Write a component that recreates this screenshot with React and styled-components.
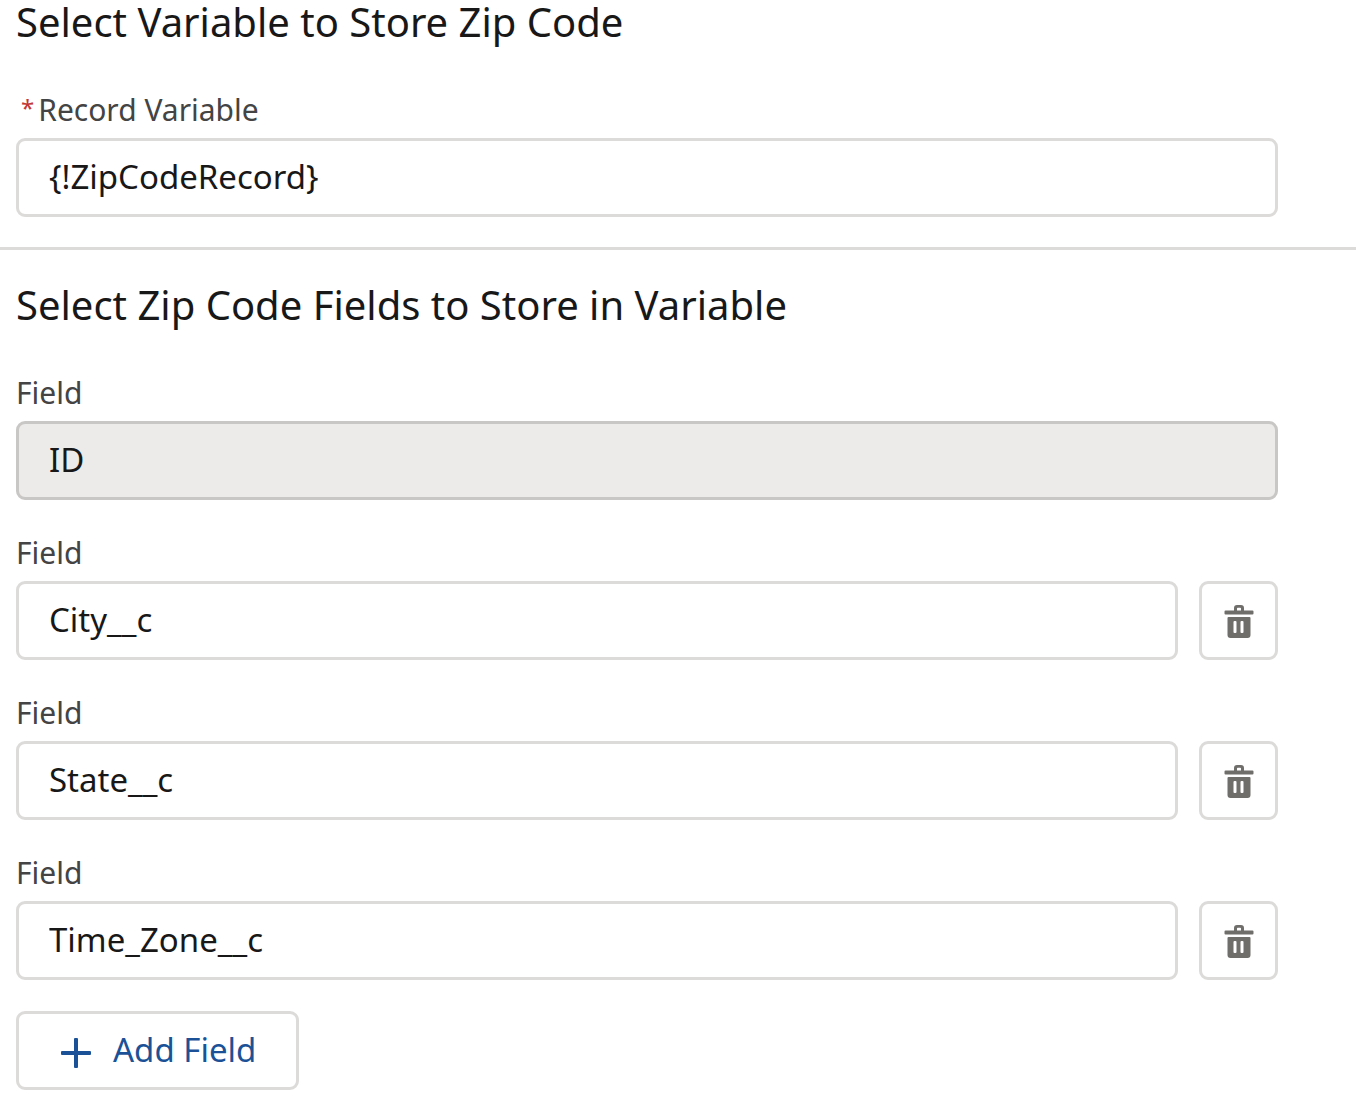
import { useState } from 'react';
import styled, { createGlobalStyle } from 'styled-components';

const GlobalStyle = createGlobalStyle`
  *, *::before, *::after {
    box-sizing: border-box;
  }

  body {
    margin: 0;
    background: #fff;
    color: #181818;
    font-family: 'Noto Sans', sans-serif;
  }
`;

const Section = styled.section`
  padding: 0 78px 0 16px;
`;

const Divider = styled.hr`
  height: 3px;
  margin: 30px 0 33px;
  border: 0;
  background: #dddbda;
`;

const Heading = styled.h2`
  margin: 0 0 44px;
  font-size: 40px;
  font-weight: 400;
  line-height: 44px;
`;

const FieldGroup = styled.div`
  margin-bottom: ${({ $last }) => ($last ? '0' : '31px')};
`;

const Label = styled.label`
  display: block;
  margin-bottom: 6px;
  color: #444;
  font-size: 30px;
  line-height: 44px;
`;

const Required = styled.abbr`
  margin: 0 4px 0 5px;
  color: #c23934;
  font-size: 24px;
  line-height: 0;
  text-decoration: none;
  vertical-align: 4px;
`;

const FieldRow = styled.div`
  display: flex;
  gap: 21px;
`;

const TextInput = styled.input`
  flex: 1;
  min-width: 0;
  height: 79px;
  padding: 0 30px 2px;
  border: 3px solid #dddbda;
  border-radius: 9px;
  background: #fff;
  color: #181818;
  font: inherit;
  font-size: 33px;

  &:disabled {
    border-color: #c9c7c5;
    background: #ecebea;
  }
`;

const Button = styled.button`
  display: inline-flex;
  align-items: center;
  justify-content: center;
  height: 79px;
  border: 3px solid #dddbda;
  border-radius: 9px;
  background: #fff;
  font: inherit;
  font-size: 33px;
  cursor: pointer;
`;

const DeleteButton = styled(Button)`
  flex: none;
  width: 79px;
  padding: 0;
  color: #706e6b;
`;

const AddButton = styled(Button)`
  gap: 20px;
  padding: 0 40px;
  color: #1b5297;
`;

const ButtonLabel = styled.span`
  padding-bottom: 2px;
`;

const TrashIcon = () => (
  <svg width="34" height="34" viewBox="0 0 34 34" fill="currentColor" aria-hidden="true">
    <path
      fillRule="evenodd"
      d="M3.500 6.500H12V4a3 3 0 0 1 3-3h4a3 3 0 0 1 3 3v2.500H30.500a1 1 0 0 1 1 1V9.500a1 1 0 0 1-1 1H3.500a1 1 0 0 1-1-1V7.500a1 1 0 0 1 1-1ZM15 6.500h4V4.500a.8.8 0 0 0-.8-.8h-2.400a.8.8 0 0 0-.8.8Z"
    />
    <path
      fillRule="evenodd"
      d="M6.500 13h21a1 1 0 0 1 1 1v17a3 3 0 0 1-3 3H8.500a3 3 0 0 1-3-3V14a1 1 0 0 1 1-1Zm6 4a1 1 0 0 0-1 1v10a1 1 0 0 0 1 1h1a1 1 0 0 0 1-1V18a1 1 0 0 0-1-1Zm7 0a1 1 0 0 0-1 1v10a1 1 0 0 0 1 1h1a1 1 0 0 0 1-1V18a1 1 0 0 0-1-1Z"
    />
  </svg>
);

const PlusIcon = () => (
  <svg width="34" height="34" viewBox="0 0 34 34" fill="currentColor" aria-hidden="true">
    <path d="M15 5a1 1 0 0 1 1-1h2a1 1 0 0 1 1 1v12h12a1 1 0 0 1 1 1v2a1 1 0 0 1-1 1H19v12a1 1 0 0 1-1 1h-2a1 1 0 0 1-1-1V21H3a1 1 0 0 1-1-1v-2a1 1 0 0 1 1-1h12Z" />
  </svg>
);

const Field = ({ id, label, value, required, disabled, last, onChange, onDelete }) => (
  <FieldGroup $last={last}>
    <Label htmlFor={id}>
      {required && <Required title="required">*</Required>}
      {label}
    </Label>
    <FieldRow>
      <TextInput
        id={id}
        type="text"
        value={value}
        required={required}
        disabled={disabled}
        onChange={(e) => onChange(e.target.value)}
      />
      {onDelete && (
        <DeleteButton type="button" aria-label="Delete field" onClick={onDelete}>
          <TrashIcon />
        </DeleteButton>
      )}
    </FieldRow>
  </FieldGroup>
);

const App = () => {
  const [record, setRecord] = useState('{!ZipCodeRecord}');
  const [fields, setFields] = useState([
    { id: 1, value: 'City__c' },
    { id: 2, value: 'State__c' },
    { id: 3, value: 'Time_Zone__c' },
  ]);

  const updateField = (id, value) => {
    setFields(fields.map((field) => (field.id === id ? { ...field, value } : field)));
  };

  const removeField = (id) => {
    setFields(fields.filter((field) => field.id !== id));
  };

  const addField = () => {
    setFields([...fields, { id: Date.now(), value: '' }]);
  };

  return (
    <main>
      <GlobalStyle />
      <Section>
        <Heading>Select Variable to Store Zip Code</Heading>
        <Field
          id="record"
          label="Record Variable"
          value={record}
          onChange={setRecord}
          required
          last
        />
      </Section>
      <Divider />
      <Section>
        <Heading>Select Zip Code Fields to Store in Variable</Heading>
        <Field id="field-id" label="Field" value="ID" disabled />
        {fields.map((field) => (
          <Field
            key={field.id}
            id={`field-${field.id}`}
            label="Field"
            value={field.value}
            onChange={(value) => updateField(field.id, value)}
            onDelete={() => removeField(field.id)}
          />
        ))}
        <AddButton type="button" onClick={addField}>
          <PlusIcon />
          <ButtonLabel>Add Field</ButtonLabel>
        </AddButton>
      </Section>
    </main>
  );
};

export default App;
